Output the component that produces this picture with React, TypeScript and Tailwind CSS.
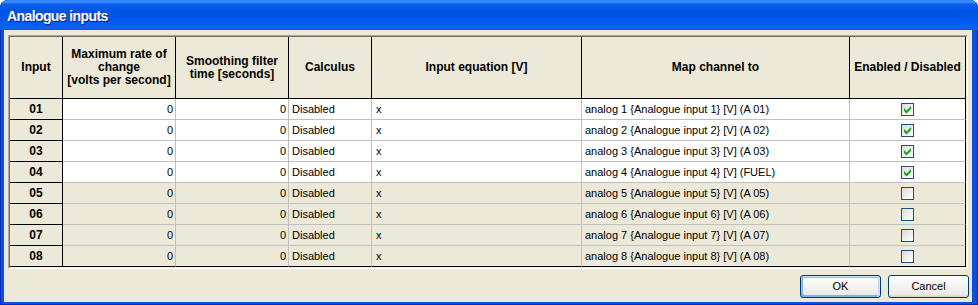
const rows = [
  { n: '01', map: 'analog 1 {Analogue input 1} [V] (A 01)', on: true },
  { n: '02', map: 'analog 2 {Analogue input 2} [V] (A 02)', on: true },
  { n: '03', map: 'analog 3 {Analogue input 3} [V] (A 03)', on: true },
  { n: '04', map: 'analog 4 {Analogue input 4} [V] (FUEL)', on: true },
  { n: '05', map: 'analog 5 {Analogue input 5} [V] (A 05)', on: false },
  { n: '06', map: 'analog 6 {Analogue input 6} [V] (A 06)', on: false },
  { n: '07', map: 'analog 7 {Analogue input 7} [V] (A 07)', on: false },
  { n: '08', map: 'analog 8 {Analogue input 8} [V] (A 08)', on: false },
];

function CheckBox({ checked }: { checked: boolean }) {
  return (
    <span className="flex h-[13px] w-[13px] items-center justify-center border border-[#1c5180] bg-[linear-gradient(135deg,#dcdcd7,#ffffff)]">
      {checked && (
        <svg width="11" height="11" viewBox="0 0 11 11">
          <path d="M2 4 L4.5 6.5 L9 2 L9 5 L4.5 9.5 L2 7 Z" fill="#21a121" />
        </svg>
      )}
    </span>
  );
}

const head = 'flex items-center justify-center border-r border-b border-black bg-[#ece9d8] text-center font-bold text-[12px] leading-[13px]';

export default function App() {
  return (
    <div className="h-[305px] w-[978px] bg-white font-['Liberation_Sans',Arial,sans-serif] text-black">
      <div className="flex h-full flex-col overflow-hidden rounded-t-[8px] bg-[#0b4fe0] shadow-[inset_1px_0_#0030b8,inset_-1px_0_#0030b8,inset_0_-1px_#0030b8]">
        <div className="flex h-[30px] shrink-0 items-center bg-[linear-gradient(180deg,#2a7dff_0%,#3e92ff_6%,#0b5fec_14%,#0054e3_35%,#0056e8_60%,#005ef2_80%,#0a63f2_92%,#0b58e6_100%)] pl-[7px] pt-[2px]">
          <span className="text-[14px] font-bold tracking-[-0.6px] text-white [text-shadow:1px_1px_#0a1f80]">Analogue inputs</span>
        </div>

        <div className="mb-[3px] ml-[4px] mr-[6px] flex flex-1 flex-col bg-[#ece9d8]">
          <div className="pl-[4px] pt-[5px]">
            <div className="w-[960px] border border-t-[#aca899] border-l-[#aca899] border-r-white border-b-white">
              <div className="border border-t-[#716f64] border-l-[#716f64] border-r-[#f1efe2] border-b-[#f1efe2]">
                <div className="flex h-[62px]">
                  <div className={`${head} w-[53px]`}>Input</div>
                  <div className={`${head} w-[113px]`}>
                    Maximum rate of<br />change<br />[volts per second]
                  </div>
                  <div className={`${head} w-[113px]`}>
                    Smoothing filter<br />time [seconds]
                  </div>
                  <div className={`${head} w-[83px]`}>Calculus</div>
                  <div className={`${head} w-[210px]`}>Input equation [V]</div>
                  <div className={`${head} w-[268px]`}>Map channel to</div>
                  <div className={`${head} w-[116px]`}>Enabled / Disabled</div>
                </div>

                {rows.map((r, i) => {
                  const last = i === rows.length - 1;
                  const line = last ? 'border-b-black' : 'border-b-[#c0c0c0]';
                  const bg = r.on ? 'bg-white' : 'bg-[#ece9d8]';
                  const cell = `flex items-center border-r border-b border-r-[#c0c0c0] ${line} ${bg} text-[11px]`;
                  return (
                    <div key={r.n} className="flex h-[21px]">
                      <div className="flex w-[53px] items-center justify-center border-r border-b border-black bg-[#ece9d8] text-[12px] font-bold">
                        {r.n}
                      </div>
                      <div className={`${cell} w-[113px] justify-end pr-[2px]`}>0</div>
                      <div className={`${cell} w-[113px] justify-end pr-[2px]`}>0</div>
                      <div className={`${cell} w-[83px] pl-[3px]`}>Disabled</div>
                      <div className={`${cell} w-[210px] pl-[4px]`}>x</div>
                      <div className={`${cell} w-[268px] pl-[3px]`}>{r.map}</div>
                      <div className={`flex w-[116px] items-center justify-center border-r border-b border-r-black ${line} ${bg} pt-[1px]`}>
                        <CheckBox checked={r.on} />
                      </div>
                    </div>
                  );
                })}
              </div>
            </div>
          </div>

          <div className="mt-[6px] flex justify-end gap-[7px] pr-[3px]">
            <button className="h-[23px] w-[81px] rounded-[3px] border border-[#003c74] bg-[linear-gradient(180deg,#ffffff,#ecebe6_86%,#d6d0c5)] text-[11px] shadow-[inset_-1px_1px_#cee7ff,inset_1px_2px_#98b8ea,inset_-2px_0_#bcd4f6,inset_1px_-1px_#89ade4,inset_2px_-2px_#89ade4]">
              OK
            </button>
            <button className="h-[23px] w-[81px] rounded-[3px] border border-[#003c74] bg-[linear-gradient(180deg,#ffffff,#ecebe6_86%,#d6d0c5)] text-[11px]">
              Cancel
            </button>
          </div>
        </div>
      </div>
    </div>
  );
}
